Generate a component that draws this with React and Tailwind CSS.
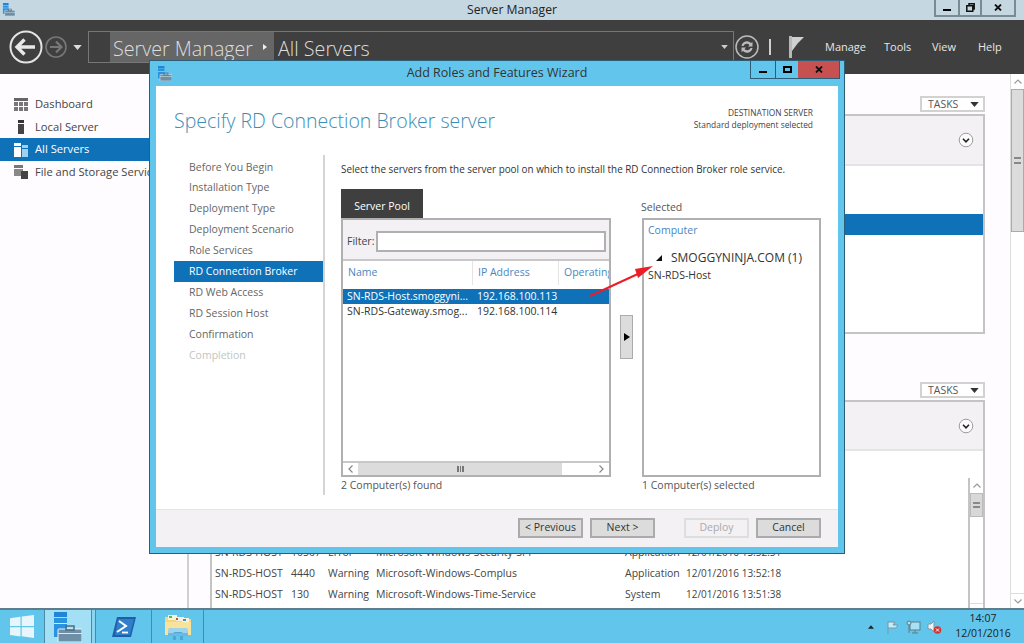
const font = { fontFamily: '"Open Sans", "Noto Sans", sans-serif' };

const wizardSteps = [
    { name: 'Before You Begin' },
    { name: 'Installation Type' },
    { name: 'Deployment Type' },
    { name: 'Deployment Scenario' },
    { name: 'Role Services' },
    { name: 'RD Connection Broker', active: true },
    { name: 'RD Web Access' },
    { name: 'RD Session Host' },
    { name: 'Confirmation' },
    { name: 'Completion', disabled: true },
];

const eventRows = [
    ['SN-RDS-HOST', '10507', 'Error', 'Microsoft-Windows-Security-SPP', 'Application', '12/01/2016 13:52:51'],
    ['SN-RDS-HOST', '4440', 'Warning', 'Microsoft-Windows-Complus', 'Application', '12/01/2016 13:52:18'],
    ['SN-RDS-HOST', '130', 'Warning', 'Microsoft-Windows-Time-Service', 'System', '12/01/2016 13:51:38'],
];

function ServerManagerIcon({ className }) {
    return (
        <svg viewBox="0 0 28 30" className={className}>
            <rect x="0" y="0" width="13" height="5" fill="#1f86d6" />
            <rect x="0" y="6" width="13" height="19" fill="#2a93e0" />
            <rect x="0" y="11" width="13" height="1" fill="#cfeafa" />
            <rect x="4" y="17" width="24" height="13" rx="1" fill="#6f8fa6" stroke="#e8f4fa" strokeWidth="1" />
            <rect x="12" y="14" width="8" height="4" fill="none" stroke="#4d6d85" strokeWidth="1.5" />
            <rect x="4" y="21" width="24" height="1" fill="#dbe8f0" />
        </svg>
    );
}

function WindowButton({ children, className }) {
    return <div className={`flex items-center justify-center ${className}`}>{children}</div>;
}

function Triangle({ className }) {
    return (
        <svg viewBox="0 0 10 6" className={className}>
            <path d="M0 0h10L5 6z" fill="currentColor" />
        </svg>
    );
}

function ExpandCircle() {
    return (
        <svg viewBox="0 0 16 16" className="w-[16px] h-[16px]">
            <circle cx="8" cy="8" r="6.8" fill="#fbfbfb" stroke="#9c9c9c" />
            <path d="M5 6.8l3 3 3-3" fill="none" stroke="#222" strokeWidth="1.6" />
        </svg>
    );
}

function TasksButton() {
    return (
        <div className="ml-auto w-[65px] h-[16px] bg-white border-2 border-[#d2d2d2] flex items-center justify-between pl-[6px] pr-[4px] pt-[1px] text-[10.5px] text-[#555]">
            <span>TASKS</span>
            <Triangle className="w-[9px] h-[5px] text-[#333]" />
        </div>
    );
}

function WizardButton({ children, disabled }) {
    return (
        <div
            className={`w-[65px] h-[20px] flex items-center justify-center text-[10.5px] border-2 ${
                disabled ? 'border-[#dedede] bg-[#f3f1f4] text-[#aaa]' : 'border-[#ababab] bg-[#dcdcdc] text-[#333]'
            }`}
        >
            {children}
        </div>
    );
}

function Sidebar() {
    return (
        <div className="w-[189px] shrink-0 border-r-2 border-[#d0d0d0] pt-[19px] text-[11.2px] text-[#444]">
            <div className="h-[23px] flex items-center pl-[14px] gap-[7px]">
                <svg viewBox="0 0 14 14" className="w-[14px] h-[14px]">
                    <rect width="14" height="3" fill="#666" />
                    <rect y="4" width="4" height="4" fill="#777" />
                    <rect x="5" y="4" width="4" height="4" fill="#777" />
                    <rect x="10" y="4" width="4" height="4" fill="#777" />
                    <rect y="9" width="4" height="4" fill="#777" />
                    <rect x="5" y="9" width="4" height="4" fill="#777" />
                    <rect x="10" y="9" width="4" height="4" fill="#777" />
                </svg>
                <span>Dashboard</span>
            </div>
            <div className="h-[22px] flex items-center pl-[14px] gap-[7px]">
                <svg viewBox="0 0 14 14" className="w-[14px] h-[14px]">
                    <rect x="4" y="0" width="6" height="3" fill="#333" />
                    <rect x="4" y="4" width="6" height="10" fill="#444" />
                </svg>
                <span>Local Server</span>
            </div>
            <div className="h-[23px] flex items-center pl-[14px] gap-[7px] bg-[#0f71b8] text-white">
                <svg viewBox="0 0 14 14" className="w-[14px] h-[14px]">
                    <rect width="7" height="3" fill="#fff" />
                    <rect y="4" width="7" height="10" fill="#fff" />
                    <rect x="8" y="2" width="6" height="3" fill="#9fd0ee" />
                    <rect x="8" y="6" width="6" height="8" fill="#9fd0ee" />
                </svg>
                <span>All Servers</span>
            </div>
            <div className="h-[22px] flex items-center pl-[14px] gap-[7px] whitespace-nowrap overflow-hidden">
                <svg viewBox="0 0 14 14" className="w-[14px] h-[14px] shrink-0">
                    <rect width="9" height="3" fill="#777" />
                    <rect y="4" width="9" height="7" fill="#888" />
                    <rect x="7" y="6" width="7" height="8" fill="#444" />
                </svg>
                <span>File and Storage Services</span>
            </div>
        </div>
    );
}

function PageContent() {
    return (
        <div className="flex-1 pl-[21px] pr-[24px] pt-[22px] flex flex-col min-w-0">
            <TasksButton />
            <div className="mt-[2px] h-[220px] border-2 border-[#c4c4c4] flex flex-col">
                <div className="h-[50px] bg-[#f3f1f4] border-b-2 border-[#e4e4e4] flex items-center justify-end pr-[9px]">
                    <ExpandCircle />
                </div>
                <div className="flex-1 bg-white pt-[48px]">
                    <div className="h-[21px] bg-[#0f71b8]" />
                </div>
            </div>
            <div className="mt-[48px]">
                <TasksButton />
            </div>
            <div className="mt-[2px] flex-1 border-x-2 border-t-2 border-[#c4c4c4] flex flex-col min-h-0">
                <div className="h-[49px] bg-[#f3f1f4] border-b-2 border-[#e4e4e4] flex items-center justify-end pr-[9px]">
                    <ExpandCircle />
                </div>
                <div className="flex-1 bg-white flex min-h-0">
                    <div className="flex-1 flex flex-col justify-end pb-[3px] pl-[3px] text-[10.5px] text-[#444]">
                        {eventRows.map((row) => (
                            <div key={row[1]} className="h-[21px] flex items-center whitespace-nowrap">
                                <span className="w-[76px]">{row[0]}</span>
                                <span className="w-[37px]">{row[1]}</span>
                                <span className="w-[48px]">{row[2]}</span>
                                <span className="w-[249px]">{row[3]}</span>
                                <span className="w-[61px]">{row[4]}</span>
                                <span className="text-[10px]">{row[5]}</span>
                            </div>
                        ))}
                    </div>
                    <div className="w-[15px] self-end h-[130px] border-l-2 border-[#c4c4c4] flex flex-col">
                        <div className="h-[15px] flex items-center justify-center text-[#999]">
                            <svg viewBox="0 0 8 5" className="w-[8px] h-[5px]"><path d="M0.5 4.5L4 1l3.5 3.5" fill="none" stroke="currentColor" strokeWidth="1.2" /></svg>
                        </div>
                        <div className="h-[24px] bg-[#d8d8d8] border border-[#bbb] flex items-center justify-center">
                            <div className="w-[7px] h-[6px] border-y-2 border-[#888]" />
                        </div>
                        <div className="flex-1" />
                        <div className="h-[5px] border-t border-[#ddd]" />
                    </div>
                </div>
            </div>
        </div>
    );
}

function PageScrollbar() {
    return (
        <div className="w-[14px] ml-[1px] shrink-0 bg-white flex flex-col border-l border-[#ddd]">
            <div className="h-[15px] flex items-center justify-center text-[#999]">
                <svg viewBox="0 0 8 5" className="w-[8px] h-[5px]"><path d="M0.5 4.5L4 1l3.5 3.5" fill="none" stroke="currentColor" strokeWidth="1.2" /></svg>
            </div>
            <div className="h-[143px] bg-[#dcdcdc] border border-[#ababab] flex items-center justify-center">
                <div className="w-[7px] h-[7px] border-y-2 border-[#888]" />
            </div>
            <div className="flex-1" />
            <div className="h-[15px] flex items-center justify-center text-[#999] border-t border-[#ddd]">
                <svg viewBox="0 0 8 5" className="w-[8px] h-[5px]"><path d="M0.5 0.5L4 4l3.5-3.5" fill="none" stroke="currentColor" strokeWidth="1.2" /></svg>
            </div>
        </div>
    );
}

function Wizard() {
    return (
        <div className="absolute left-[149px] top-[60px] w-[696px] h-[494px] bg-[#62c6ec] border border-[#2b5f78] flex flex-col">
            <div className="h-[25px] shrink-0 relative flex items-center justify-center text-[12.5px] text-[#333]">
                <ServerManagerIcon className="absolute left-[8px] top-[5px] w-[14px] h-[15px]" />
                <span>Add Roles and Features Wizard</span>
                <div className="absolute top-0 right-[4px] h-[18px] flex border-x border-b border-[#2b5f78]">
                    <WindowButton className="w-[25px] border-r border-[#2b5f78]">
                        <div className="w-[8px] h-[2px] mt-[4px] bg-black" />
                    </WindowButton>
                    <WindowButton className="w-[22px]">
                        <div className="w-[9px] h-[7px] border-2 border-black" />
                    </WindowButton>
                    <WindowButton className="w-[41px] bg-[#c75050] text-[#111]">
                        <svg viewBox="0 0 8 7" className="w-[8px] h-[7px]"><path d="M1 0.5l6 6M7 0.5l-6 6" stroke="currentColor" strokeWidth="1.8" /></svg>
                    </WindowButton>
                </div>
            </div>
            <div className="mx-[6px] mb-[6px] flex-1 bg-white flex flex-col min-h-0">
                <div className="h-[69px] shrink-0 flex pl-[18px] pr-[25px]">
                    <h1 className="text-[19.5px] font-light text-[#3b8eb5] mt-[20px] leading-[30px]">Specify RD Connection Broker server</h1>
                    <div className="ml-auto mt-[21px] text-right text-[8.4px] leading-[12px] text-[#444]">
                        <div>DESTINATION SERVER</div>
                        <div>Standard deployment selected</div>
                    </div>
                </div>
                <div className="flex-1 flex min-h-0">
                    <div className="w-[167px] shrink-0 pl-[18px] pt-[2px] text-[10.5px]">
                        {wizardSteps.map((step) => (
                            <div
                                key={step.name}
                                className={`h-[20.9px] pl-[15px] flex items-center ${
                                    step.active ? 'bg-[#0f71b8] text-white' : step.disabled ? 'text-[#c4c4c4]' : 'text-[#666]'
                                }`}
                            >
                                {step.name}
                            </div>
                        ))}
                    </div>
                    <div className="w-[2px] h-[340px] bg-[#d4d4d4] shrink-0" />
                    <div className="ml-[16px] flex-1 pr-[17px] text-[10.5px] text-[#444]">
                        <p className="h-[15px] mt-[7px] leading-[15px] text-[9.9px] text-[#333] whitespace-nowrap">Select the servers from the server pool on which to install the RD Connection Broker role service.</p>
                        <div className="flex mt-[12px]">
                            <div className="w-[270px] shrink-0">
                                <div className="w-[82px] h-[30px] bg-[#3f3f3f] text-white flex items-center justify-center pt-[6px]">Server Pool</div>
                                <div className="h-[259px] border-2 border-[#b0b0b0] flex flex-col -mt-[1px]">
                                    <div className="h-[41px] bg-[#f3f1f4] border-b-2 border-[#c8c8c8] flex items-center pl-[4px] pt-[4px] gap-[2px]">
                                        <span>Filter:</span>
                                        <div className="w-[230px] h-[21px] bg-white border-2 border-[#b0b0b0]" />
                                    </div>
                                    <div className="h-[28px] flex items-center text-[#4a86bf] pb-[4px]">
                                        <div className="w-[130px] pl-[5px] h-full flex items-center border-r border-[#e4e4e4]">Name</div>
                                        <div className="w-[86px] pl-[5px] h-full flex items-center border-r border-[#e4e4e4]">IP Address</div>
                                        <div className="flex-1 pl-[5px] h-full flex items-center overflow-hidden">Operating</div>
                                    </div>
                                    <div className="h-[15px] bg-[#0f71b8] text-white flex items-center whitespace-nowrap">
                                        <span className="w-[134px] pl-[4px]">SN-RDS-Host.smoggyni...</span>
                                        <span>192.168.100.113</span>
                                    </div>
                                    <div className="h-[15px] flex items-center whitespace-nowrap text-[#333]">
                                        <span className="w-[134px] pl-[4px]">SN-RDS-Gateway.smog...</span>
                                        <span>192.168.100.114</span>
                                    </div>
                                    <div className="flex-1" />
                                    <div className="h-[14px] flex items-stretch border-t-2 border-[#c8c8c8] text-[#888]">
                                        <div className="w-[15px] flex items-center justify-center">
                                            <svg viewBox="0 0 5 8" className="w-[5px] h-[8px]"><path d="M4.5 0.5L1 4l3.5 3.5" fill="none" stroke="currentColor" strokeWidth="1.2" /></svg>
                                        </div>
                                        <div className="w-[204px] bg-[#dcdcdc] flex items-center justify-center">
                                            <div className="w-[7px] h-[6px] border-x-2 border-[#777] flex justify-center"><div className="w-[1px] bg-[#777]" /></div>
                                        </div>
                                        <div className="flex-1" />
                                        <div className="w-[15px] flex items-center justify-center">
                                            <svg viewBox="0 0 5 8" className="w-[5px] h-[8px]"><path d="M0.5 0.5L4 4 0.5 7.5" fill="none" stroke="currentColor" strokeWidth="1.2" /></svg>
                                        </div>
                                    </div>
                                </div>
                                <p className="mt-[1px] leading-[15px] text-[#555]">2 Computer(s) found</p>
                            </div>
                            <div className="w-[31px] shrink-0 flex justify-center pt-[126px]">
                                <div className="w-[13px] h-[44px] bg-[#dcdcdc] border border-[#ababab] flex items-center justify-center text-black">
                                    <svg viewBox="0 0 6 8" className="w-[6px] h-[8px]"><path d="M0 0l6 4-6 4z" fill="currentColor" /></svg>
                                </div>
                            </div>
                            <div className="w-[179px] shrink-0">
                                <div className="h-[29px] flex items-center -ml-[1px] pt-[9px] text-[#555]">Selected</div>
                                <div className="h-[259px] border-2 border-[#b0b0b0] pl-[4px] pt-[3px]">
                                    <div className="text-[#4a86bf] leading-[15px]">Computer</div>
                                    <div className="flex items-center mt-[12px] h-[16px] text-[12px] text-[#333] whitespace-nowrap">
                                        <svg viewBox="0 0 6 6" className="w-[6px] h-[6px] ml-[8px] mr-[9px]"><path d="M6 0v6H0z" fill="#111" /></svg>
                                        SMOGGYNINJA.COM (1)
                                    </div>
                                    <div className="mt-[1px] leading-[16px] text-[#333]">SN-RDS-Host</div>
                                </div>
                                <p className="mt-[1px] leading-[15px] text-[#555]">1 Computer(s) selected</p>
                            </div>
                        </div>
                    </div>
                </div>
                <div className="h-[38px] shrink-0 bg-[#f3f1f4] border-t border-[#e4e4e4] flex items-start pt-[8px] pr-[17px]">
                    <div className="ml-auto flex">
                        <WizardButton>&lt; Previous</WizardButton>
                        <div className="ml-[7px]"><WizardButton>Next &gt;</WizardButton></div>
                        <div className="ml-[29px]"><WizardButton disabled>Deploy</WizardButton></div>
                        <div className="ml-[7px]"><WizardButton>Cancel</WizardButton></div>
                    </div>
                </div>
            </div>
        </div>
    );
}

function Taskbar() {
    return (
        <div className="h-[35px] shrink-0 bg-[#62c6ec] border-t-2 border-[#5d7d8c] flex items-stretch">
            <div className="w-[44px] flex items-center justify-center">
                <svg viewBox="0 0 24 23" className="w-[24px] h-[23px]">
                    <path d="M0 3.2L10.5 1.7V11H0zM11.7 1.5L24 0v11H11.7zM0 12.2h10.5v9.3L0 20zM11.7 12.2H24V23l-12.3-1.7z" fill="#e6f6fc" />
                </svg>
            </div>
            <div className="w-[52px] flex border-x border-[#4a8aa4]">
                <div className="w-[47px] bg-[#a3e0f6] flex items-center justify-center border-r border-[#4a8aa4]">
                    <ServerManagerIcon className="w-[28px] h-[30px]" />
                </div>
                <div className="flex-1 bg-[#8ad6f2]" />
            </div>
            <div className="w-[56px] flex items-center justify-center border-r border-[#4a8aa4]">
                <svg viewBox="0 0 24 20" className="w-[24px] h-[20px]">
                    <path d="M5 0h19l-5 20H0z" fill="#1f5fa8" />
                    <path d="M6 2h16l-4 16H3z" fill="#2f7fcb" />
                    <path d="M7 4l7 5-9 6" fill="none" stroke="#fff" strokeWidth="2" />
                    <path d="M10 15.5h6" stroke="#fff" strokeWidth="1.8" />
                </svg>
            </div>
            <div className="w-[52px] flex items-center justify-center border-r border-[#4a8aa4]">
                <svg viewBox="0 0 28 26" className="w-[28px] h-[26px]">
                    <path d="M1 3h10l2 2h14v15H1z" fill="#f2d77e" />
                    <rect x="4" y="1" width="9" height="5" fill="#f8f3dc" />
                    <rect x="5" y="2" width="3" height="2" fill="#4fbf4f" />
                    <rect x="12" y="3" width="8" height="4" fill="#f8f3dc" />
                    <rect x="12" y="4" width="2" height="2" fill="#c84a3a" />
                    <rect x="18" y="4" width="7" height="4" fill="#f8f3dc" />
                    <rect x="19" y="5" width="3" height="2" fill="#3f8fd8" />
                    <path d="M1 8h26v13H1z" fill="#f7e39b" />
                    <path d="M4 20v-4a2 2 0 012-2h16a2 2 0 012 2v4" fill="#9fd3ea" />
                    <path d="M9 26v-6a2 2 0 012-2h6a2 2 0 012 2v6h-3v-4h-4v4z" fill="#4fa6d8" />
                    <path d="M4 19h20v3H4z" fill="#6bb9e2" />
                </svg>
            </div>
            <div className="flex-1" />
            <div className="flex items-center pr-[8px] text-[#222]">
                <Triangle className="w-[6px] h-[4px] rotate-180" />
                <svg viewBox="0 0 14 14" className="w-[14px] h-[14px] ml-[12px]">
                    <path d="M2 1v13M2 2h7l-2 3 5 0-2 3H2" fill="#c5ecfa" stroke="#7a97a5" strokeWidth="1" />
                </svg>
                <svg viewBox="0 0 15 14" className="w-[15px] h-[14px] ml-[6px]">
                    <rect x="4" y="2" width="10" height="8" fill="#a8e0f5" stroke="#5f7c88" />
                    <circle cx="3" cy="3" r="2" fill="#a8e0f5" stroke="#5f7c88" />
                    <path d="M3 5v8M6 13h6M9 10v3" stroke="#5f7c88" fill="none" />
                </svg>
                <svg viewBox="0 0 15 14" className="w-[15px] h-[14px] ml-[6px]">
                    <path d="M1 4h3l3-3v11l-3-3H1z" fill="#e8f6fb" stroke="#8396a0" />
                    <circle cx="10.5" cy="10" r="3.8" fill="#d6332f" />
                    <path d="M9 8.5l3 3M12 8.5l-3 3" stroke="#fff" strokeWidth="1" />
                </svg>
                <div className="w-[66px] ml-[8px] pb-[2px] text-center text-[10.5px] leading-[15px] text-[#222]">
                    <div>14:07</div>
                    <div>12/01/2016</div>
                </div>
            </div>
        </div>
    );
}

export default function App() {
    return (
        <div style={font} className="relative w-[1024px] h-[643px] overflow-hidden flex flex-col bg-[#fffcff]">
            <div className="h-[20px] shrink-0 bg-[#c5d7e0] relative flex items-center justify-center text-[12.2px] text-[#222]">
                <ServerManagerIcon className="absolute left-[2px] top-[3px] w-[14px] h-[13px]" />
                <span>Server Manager</span>
                <div className="absolute top-0 right-[8px] h-[17px] flex border-x-2 border-b-2 border-[#7b8b92]">
                    <WindowButton className="w-[24px] border-r-2 border-[#7b8b92]">
                        <div className="w-[8px] h-[2px] mt-[4px] bg-black" />
                    </WindowButton>
                    <WindowButton className="w-[22px] border-r-2 border-[#7b8b92]">
                        <svg viewBox="0 0 9 9" className="w-[9px] h-[9px]"><path d="M3 2V0.8h5.2V6H7M0.8 2.8h6v5.4h-6z" fill="none" stroke="#111" strokeWidth="1.5" /></svg>
                    </WindowButton>
                    <WindowButton className="w-[32px] text-[#111]">
                        <svg viewBox="0 0 8 7" className="w-[8px] h-[7px]"><path d="M1 0.5l6 6M7 0.5l-6 6" stroke="currentColor" strokeWidth="1.8" /></svg>
                    </WindowButton>
                </div>
            </div>

            <div className="h-[54px] shrink-0 bg-[#3f3f3f] flex items-center">
                <svg viewBox="0 0 34 34" className="w-[34px] h-[34px] ml-[9px]">
                    <circle cx="17" cy="17" r="15.5" fill="none" stroke="#e4e4e4" strokeWidth="2" />
                    <path d="M8 17h18M15.5 9.5L8 17l7.5 7.5" fill="none" stroke="#e8e8e8" strokeWidth="3.4" />
                </svg>
                <svg viewBox="0 0 22 22" className="w-[22px] h-[22px] ml-[2px]">
                    <circle cx="11" cy="11" r="10" fill="none" stroke="#777" strokeWidth="1.6" />
                    <path d="M16 11H5M11 5.5l5.5 5.5-5.5 5.5" fill="none" stroke="#777" strokeWidth="2.2" />
                </svg>
                <Triangle className="w-[9px] h-[5px] ml-[6px] text-[#ddd]" />
                <div className="ml-[6px] w-[646px] h-[32px] border border-[#777] flex items-stretch text-[19.7px] font-light text-[#ddd] whitespace-nowrap overflow-hidden">
                    <div className="w-[21px] shrink-0" />
                    <div className="w-[164px] shrink-0 bg-[#666] flex items-center pl-[3px] pt-[3px]">
                        <span className="flex-1">Server Manager</span>
                        <svg viewBox="0 0 4 6" className="w-[4px] h-[6px] mr-[7px] -mt-[3px]"><path d="M0 0l4 3-4 3z" fill="#eee" /></svg>
                    </div>
                    <div className="flex-1 flex items-center pl-[4px] pt-[3px]">
                        All Servers
                        <Triangle className="w-[7px] h-[4px] ml-auto mr-[5px] -mt-[3px] text-[#ccc]" />
                    </div>
                </div>
                <svg viewBox="0 0 24 24" className="w-[24px] h-[24px] ml-[1px]">
                    <circle cx="12" cy="12" r="11" fill="none" stroke="#bbb" strokeWidth="1.5" />
                    <path d="M6.5 11a5.5 5.5 0 019.5-3l1.5-1v4.5H13l1.5-1.5a3.5 3.5 0 00-6 1zM17.5 13a5.5 5.5 0 01-9.5 3l-1.5 1v-4.5H11l-1.5 1.5a3.5 3.5 0 006-1z" fill="#bbb" />
                </svg>
                <div className="w-[2px] h-[16px] ml-[10px] bg-[#cfcfcf]" />
                <svg viewBox="0 0 16 22" className="w-[16px] h-[22px] ml-[17px] mr-[21px]">
                    <path d="M1 0h3v22H1z" fill="#b8b8b8" />
                    <path d="M4 1h12l-6 6-6 8z" fill="#d0d0d0" />
                </svg>
                <div className="flex text-[11px] text-[#e6e6e6]">
                    <span className="w-[59px]">Manage</span>
                    <span className="w-[48px]">Tools</span>
                    <span className="w-[46px]">View</span>
                    <span>Help</span>
                </div>
            </div>

            <div className="flex-1 flex min-h-0">
                <Sidebar />
                <PageContent />
                <PageScrollbar />
            </div>

            <Taskbar />

            <Wizard />

            <svg viewBox="0 0 1024 643" className="absolute inset-0 w-[1024px] h-[643px] pointer-events-none">
                <path d="M590 296L640 273" stroke="#ee1c25" strokeWidth="2" />
                <path d="M653 266L635 269l3 9z" fill="#ee1c25" />
            </svg>
        </div>
    );
}
